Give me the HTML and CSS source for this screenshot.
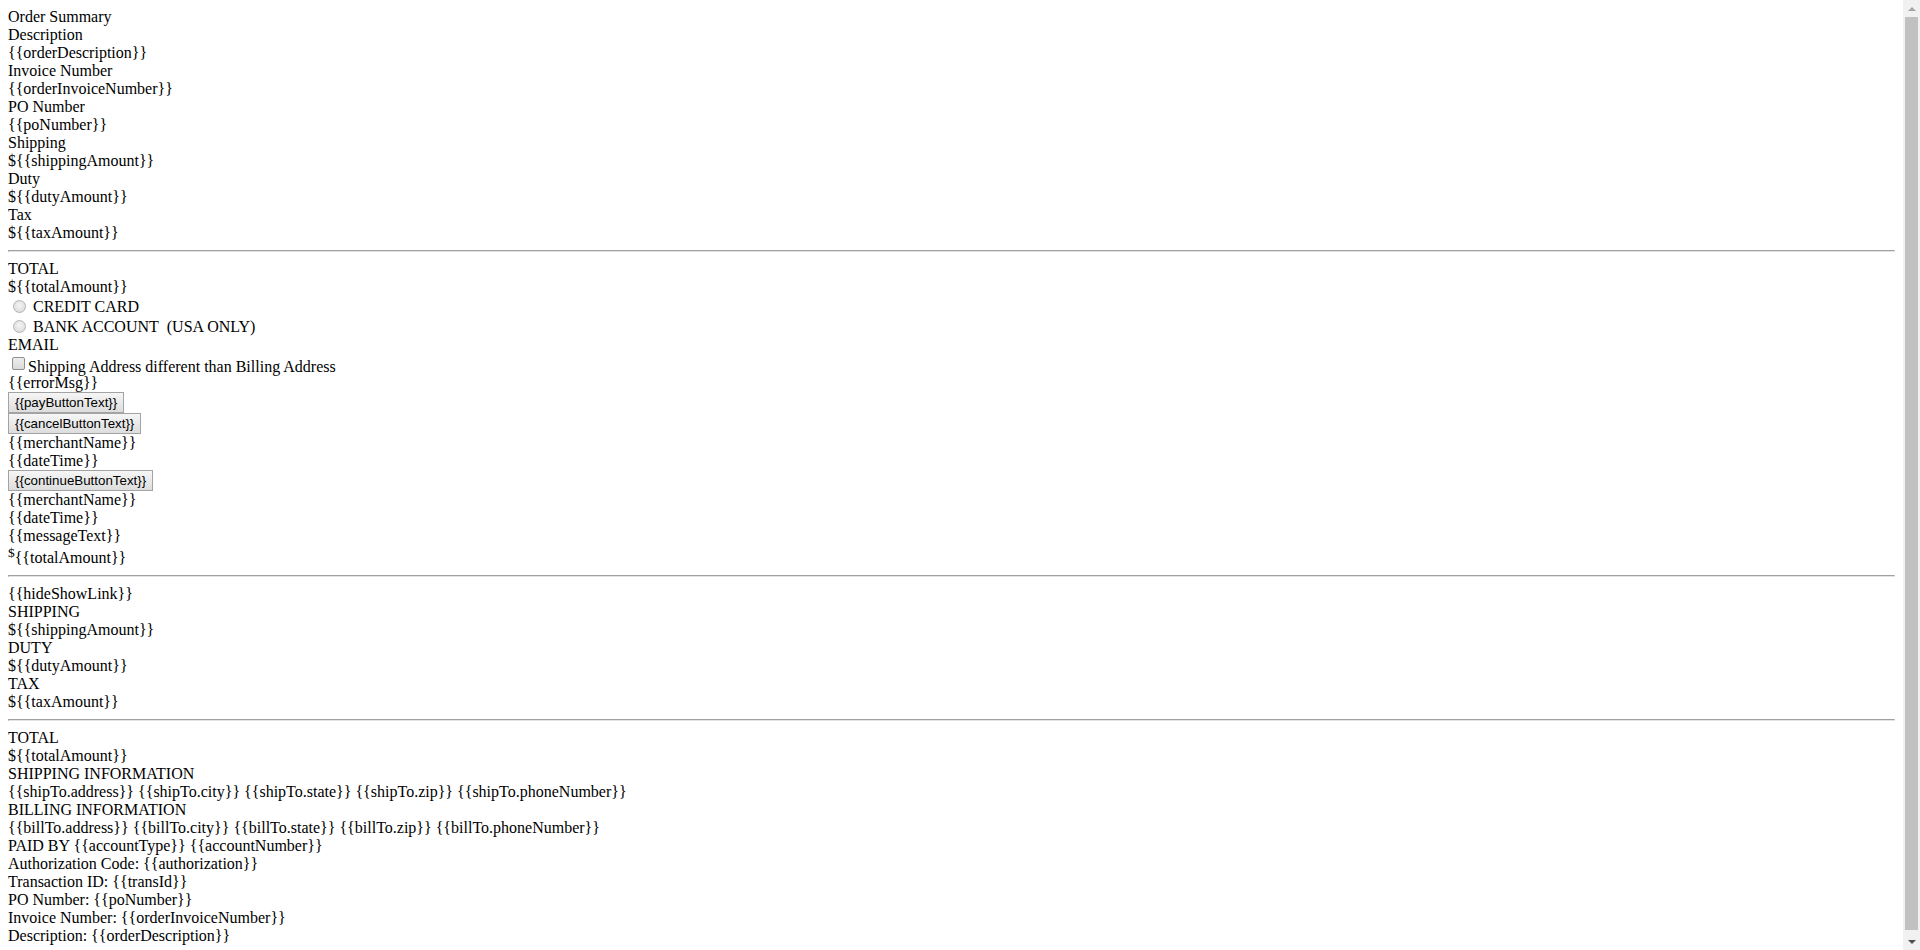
FILE: index.html
```html
<!DOCTYPE html>
<html>
<head>
<meta charset="utf-8">
<title>Order Summary</title>
<link rel="stylesheet" href="styles.css">
</head>
<body>
<div class="summary">
  <div>Order Summary</div>
  <div>Description</div>
  <div>{{orderDescription}}</div>
  <div>Invoice Number</div>
  <div>{{orderInvoiceNumber}}</div>
  <div>PO Number</div>
  <div>{{poNumber}}</div>
  <div>Shipping</div>
  <div>${{shippingAmount}}</div>
  <div>Duty</div>
  <div>${{dutyAmount}}</div>
  <div>Tax</div>
  <div>${{taxAmount}}</div>
</div>
<hr class="rule">
<div class="payment">
  <div>TOTAL</div>
  <div>${{totalAmount}}</div>
  <label class="opt-row radio-row"><input type="radio" name="pay" class="radio"> CREDIT CARD</label>
  <label class="opt-row radio-row"><input type="radio" name="pay" class="radio"> BANK ACCOUNT&nbsp; (USA ONLY)</label>
  <div>EMAIL</div>
  <label class="opt-row"><input type="checkbox" class="check">Shipping Address different than Billing Address</label>
  <div>{{errorMsg}}</div>
  <div class="btn-row"><button class="btn">{{payButtonText}}</button></div>
  <div class="btn-row"><button class="btn">{{cancelButtonText}}</button></div>
  <div>{{merchantName}}</div>
  <div>{{dateTime}}</div>
  <div class="btn-row"><button class="btn">{{continueButtonText}}</button></div>
  <div>{{merchantName}}</div>
  <div>{{dateTime}}</div>
  <div>{{messageText}}</div>
  <div><sup>$</sup>{{totalAmount}}</div>
</div>
<hr class="rule">
<div class="details">
  <div>{{hideShowLink}}</div>
  <div>SHIPPING</div>
  <div>${{shippingAmount}}</div>
  <div>DUTY</div>
  <div>${{dutyAmount}}</div>
  <div>TAX</div>
  <div>${{taxAmount}}</div>
</div>
<hr class="rule">
<div class="receipt">
  <div>TOTAL</div>
  <div>${{totalAmount}}</div>
  <div>SHIPPING INFORMATION</div>
  <div>{{shipTo.address}} {{shipTo.city}} {{shipTo.state}} {{shipTo.zip}} {{shipTo.phoneNumber}}</div>
  <div>BILLING INFORMATION</div>
  <div>{{billTo.address}} {{billTo.city}} {{billTo.state}} {{billTo.zip}} {{billTo.phoneNumber}}</div>
  <div>PAID BY {{accountType}} {{accountNumber}}</div>
  <div>Authorization Code: {{authorization}}</div>
  <div>Transaction ID: {{transId}}</div>
  <div>PO Number: {{poNumber}}</div>
  <div>Invoice Number: {{orderInvoiceNumber}}</div>
  <div>Description: {{orderDescription}}</div>
</div>
<div class="scrollbar" aria-hidden="true">
  <div class="sb-btn"><span class="arrow-up"></span></div>
  <div class="sb-thumb"></div>
  <div class="sb-btn"><span class="arrow-down"></span></div>
</div>
</body>
</html>
```

FILE: styles.css
```css
html {
  background: #fff;
}

body {
  margin: 8px 25px 8px 8px;
  font-family: "Liberation Serif", "Times New Roman", serif;
  font-size: 16px;
  color: #000;
}

.rule {
  margin: 8px 0;
  border-style: solid;
  border-width: 1px;
  border-top-color: #a0a0a0;
  border-left-color: #a0a0a0;
  border-bottom-color: #e3e3e3;
  border-right-color: #e3e3e3;
}

.opt-row {
  display: block;
  height: 20px;
}

.radio-row {
  height: 18px;
  padding-top: 2px;
}

.radio {
  appearance: none;
  -webkit-appearance: none;
  width: 13px;
  height: 13px;
  margin: 0 3px 0 5px;
  border: 1px solid #b4b4b4;
  border-radius: 50%;
  background: radial-gradient(circle at 50% 40%, #f4f4f4 0%, #dcdcdc 80%);
  box-sizing: border-box;
  vertical-align: -1px;
}

.check {
  appearance: none;
  -webkit-appearance: none;
  width: 13px;
  height: 13px;
  margin: 3px 3px 3px 4px;
  border: 1px solid #8f8f8f;
  border-radius: 2px;
  background: linear-gradient(#ededed, #dadada);
  box-sizing: border-box;
  vertical-align: -1px;
}

.btn-row {
  display: flex;
}

.btn {
  font-family: "Liberation Sans", Arial, sans-serif;
  font-size: 13.333px;
  line-height: 15px;
  color: #000;
  padding: 2px 6px;
  margin: 0;
  border: 1px solid #a3a3a3;
  border-radius: 0;
  background: linear-gradient(#f6f6f6, #dddddd);
}

sup {
  font-size: smaller;
}

.scrollbar {
  position: fixed;
  top: 0;
  right: 0;
  width: 17px;
  height: 100vh;
  background: #f1f1f1;
  display: flex;
  flex-direction: column;
}

.sb-btn {
  height: 17px;
  flex: none;
  display: flex;
  align-items: center;
  justify-content: center;
}

.sb-thumb {
  flex: 1;
  margin: 0 2px 3px 2px;
  background: #c1c1c1;
}

.arrow-up {
  width: 0;
  height: 0;
  border-left: 4px solid transparent;
  border-right: 4px solid transparent;
  border-bottom: 4px solid #a3a3a3;
}

.arrow-down {
  width: 0;
  height: 0;
  border-left: 4px solid transparent;
  border-right: 4px solid transparent;
  border-top: 4px solid #505050;
}
```
